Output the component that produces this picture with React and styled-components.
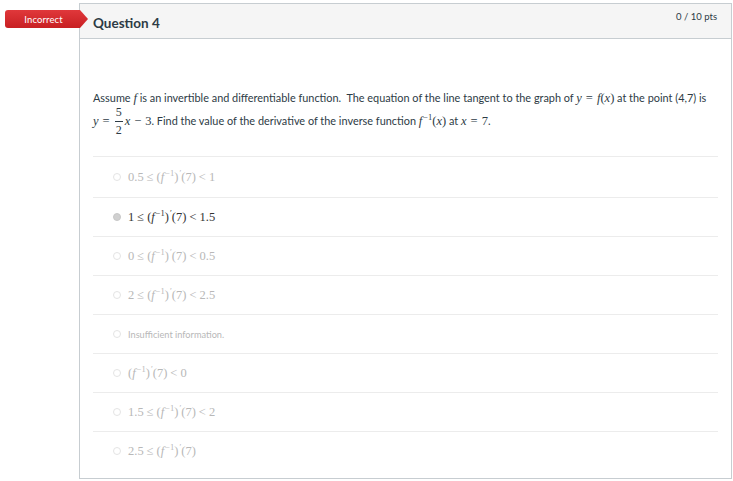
import styled, { createGlobalStyle } from "styled-components";

const GlobalStyle = createGlobalStyle`
  html, body {
    margin: 0;
    padding: 0;
    background: #fff;
  }
  body {
    font-family: Lato, "Open Sans", sans-serif;
    color: #2d3b45;
  }
`;

const Page = styled.div`
  display: flex;
  width: 733px;
  height: 481px;
  overflow: hidden;
`;

const Side = styled.div`
  flex: 0 0 79px;
  width: 79px;
  min-width: 0;
  padding: 10px 0 0 5px;
  box-sizing: border-box;
`;

const Badge = styled.div`
  position: relative;
  z-index: 1;
  width: 83px;
  height: 18px;
  box-sizing: border-box;
  padding-right: 6px;
  display: flex;
  align-items: center;
  justify-content: center;
  background: linear-gradient(#e0383b, #c81f22);
  clip-path: polygon(0 0, 75px 0, 83px 50%, 75px 100%, 0 100%);
  border-radius: 3px 0 0 3px;
  color: #fff;
  font-size: 9.5px;
  letter-spacing: 0.1px;
`;

const Card = styled.div`
  flex: 1;
  min-width: 0;
  margin: 3px 1px 2px 0;
  border: 1px solid #c7cdd1;
  display: flex;
  flex-direction: column;
`;

const Header = styled.div`
  height: 34px;
  background: #f5f5f5;
  border-bottom: 1px solid #c7cdd1;
  display: flex;
  justify-content: space-between;
  padding: 0 14px 0 13px;
`;

const Title = styled.h2`
  margin: 0;
  padding-top: 11px;
  font-size: 13.5px;
  font-weight: 700;
  color: #2d3b45;
`;

const Points = styled.span`
  padding-top: 7px;
  font-size: 9.5px;
  color: #2d3b45;
`;

const Body = styled.div`
  padding: 48px 13px 0 13px;
`;

const Question = styled.div`
  font-size: 10.9px;
  line-height: 22px;
  color: #2d3b45;
  padding-bottom: 20px;
`;

const M = styled.span`
  font-family: "Liberation Serif", "DejaVu Serif", serif;
  font-size: 12.5px;
  font-style: ${(p) => (p.$up ? "normal" : "italic")};
`;

const Op = styled.span`
  font-family: "Liberation Serif", "DejaVu Serif", serif;
  font-size: 12.5px;
  margin: 0 4px;
`;

const Frac = styled.span`
  display: inline-flex;
  flex-direction: column;
  align-items: center;
  vertical-align: middle;
  font-family: "Liberation Serif", "DejaVu Serif", serif;
  font-size: 12px;
  line-height: 11px;
  margin: -2px 2px 0 1px;
  & > span:first-child {
    border-bottom: 1px solid currentColor;
    padding: 0 1px 3px;
  }
  & > span:last-child {
    padding-top: 3px;
  }
`;

const Sup = styled.sup`
  font-size: 8.5px;
  vertical-align: 5px;
  line-height: 0;
  font-style: normal;
  font-family: "Liberation Serif", "DejaVu Serif", serif;
  margin-left: 1px;
`;

const List = styled.div`
  display: flex;
  flex-direction: column;
`;

const Row = styled.div`
  height: ${(p) => (p.$first ? 40 : 38)}px;
  border-top: 1px solid #ececec;
  display: flex;
  align-items: center;
  padding-left: 20px;
  gap: 7px;
  color: ${(p) => (p.$selected ? "#333" : "#b8b8b8")};
`;

const Radio = styled.span`
  width: 6px;
  height: 6px;
  border-radius: 50%;
  border: 1px solid ${(p) => (p.$selected ? "#c8c8c8" : "#e4e4e4")};
  background: ${(p) => (p.$selected ? "#d0d0d0" : "#fff")};
  flex: none;
`;

const Ans = styled.span`
  font-family: "Liberation Serif", "DejaVu Serif", serif;
  font-size: 12.5px;
  white-space: nowrap;
`;

const Rel = styled.span`
  margin: 0 3px;
`;

const Plain = styled.span`
  font-size: 9.2px;
`;

const Deriv = () => (
  <>
    (<i>f</i>
    <Sup>−1</Sup>)<Sup>′</Sup>(7)
  </>
);

const answers = [
  { pre: "0.5", rel1: "≤", rel2: "<", post: "1" },
  { pre: "1", rel1: "≤", rel2: "<", post: "1.5", selected: true },
  { pre: "0", rel1: "≤", rel2: "<", post: "0.5" },
  { pre: "2", rel1: "≤", rel2: "<", post: "2.5" },
  { text: "Insufficient information." },
  { rel2: "<", post: "0" },
  { pre: "1.5", rel1: "≤", rel2: "<", post: "2" },
  { pre: "2.5", rel1: "≤" },
];

export default function App() {
  return (
    <>
      <GlobalStyle />
      <Page>
        <Side>
          <Badge>Incorrect</Badge>
        </Side>
        <Card>
          <Header>
            <Title>Question 4</Title>
            <Points>0 / 10 pts</Points>
          </Header>
          <Body>
            <Question>
              Assume <M>f</M> is an invertible and differentiable function.&nbsp; The
              equation of the line tangent to the graph of <M>y</M>
              <Op>=</Op>
              <M>f</M>
              <M $up>(</M>
              <M>x</M>
              <M $up>)</M> at the point (4,7) is
              <br />
              <M>y</M>
              <Op>=</Op>
              <Frac>
                <span>5</span>
                <span>2</span>
              </Frac>
              <M>x</M>
              <Op>−</Op>
              <M $up>3</M>. Find the value of the derivative of the inverse function{" "}
              <M>f</M>
              <Sup>−1</Sup>
              <M $up>(</M>
              <M>x</M>
              <M $up>)</M> at <M>x</M>
              <Op>=</Op>
              <M $up>7</M>.
            </Question>
            <List>
              {answers.map((a, i) => (
                <Row key={i} $first={i === 0} $selected={a.selected}>
                  <Radio $selected={a.selected} />
                  {a.text ? (
                    <Plain>{a.text}</Plain>
                  ) : (
                    <Ans>
                      {a.pre}
                      {a.rel1 && <Rel>{a.rel1}</Rel>}
                      <Deriv />
                      {a.rel2 && <Rel>{a.rel2}</Rel>}
                      {a.post}
                    </Ans>
                  )}
                </Row>
              ))}
            </List>
          </Body>
        </Card>
      </Page>
    </>
  );
}
